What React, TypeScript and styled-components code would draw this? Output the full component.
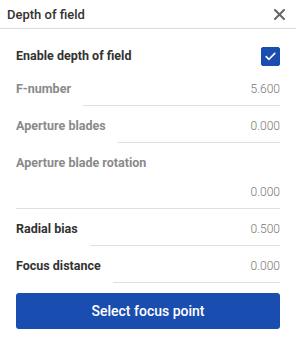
import React, { useState } from 'react';
import styled, { createGlobalStyle } from 'styled-components';

const GlobalStyle = createGlobalStyle`
    html, body {
        margin: 0;
        padding: 0;
        background: #ffffff;
    }
    body {
        font-family: Roboto, "Noto Sans", Arial, sans-serif;
        -webkit-font-smoothing: antialiased;
    }
`;

const Panel = styled.div`
    width: 296px;
    height: 346px;
    background: #fff;
    box-sizing: border-box;
`;

const Header = styled.div`
    height: 28px;
    display: flex;
    align-items: center;
    justify-content: space-between;
    padding: 0 10px 0 7px;
    border-bottom: 1px solid #dcdcdc;
`;

const Title = styled.div`
    font-size: 13px;
    font-weight: 500;
    color: #333;
`;

const CloseButton = styled.button`
    border: none;
    background: none;
    padding: 0;
    width: 14px;
    height: 14px;
    display: flex;
    align-items: center;
    justify-content: center;
    cursor: pointer;
`;

const Body = styled.div`
    display: flex;
    flex-direction: column;
    gap: 10px;
    padding: 14px 16px 0;
`;

const CheckRow = styled.label`
    height: 26px;
    display: flex;
    align-items: center;
    justify-content: space-between;
    cursor: pointer;
`;

const Label = styled.span<{ $disabled?: boolean }>`
    font-size: 12.5px;
    font-weight: 700;
    line-height: 20px;
    white-space: nowrap;
    color: ${(p) => (p.$disabled ? '#8a8a8a' : '#333')};
`;

const CheckBox = styled.span<{ $checked: boolean }>`
    width: 19px;
    height: 19px;
    border-radius: 2px;
    box-sizing: border-box;
    display: flex;
    align-items: center;
    justify-content: center;
    background: ${(p) => (p.$checked ? '#1a4db0' : '#fff')};
    border: 1px solid ${(p) => (p.$checked ? '#1a4db0' : '#999')};
`;

const Field = styled.div`
    display: flex;
    flex-wrap: wrap;
    align-items: flex-start;
    column-gap: 12px;
    row-gap: 9px;
`;

const Value = styled.div`
    flex: 1 1 130px;
    font-size: 12px;
    font-weight: 300;
    line-height: 20px;
    color: #777;
    text-align: right;
    padding-bottom: 6px;
    border-bottom: 1px solid #e0e0e0;
`;

const PrimaryButton = styled.button`
    height: 36px;
    border: none;
    border-radius: 3px;
    background: #1a4db0;
    color: #fff;
    font-family: inherit;
    font-size: 14px;
    font-weight: 500;
    cursor: pointer;
`;

const fields = [
    { label: 'F-number', value: '5.600', disabled: true },
    { label: 'Aperture blades', value: '0.000', disabled: true },
    { label: 'Aperture blade rotation', value: '0.000', disabled: true },
    { label: 'Radial bias', value: '0.500', disabled: false },
    { label: 'Focus distance', value: '0.000', disabled: false },
];

const App = () => {
    const [enabled, setEnabled] = useState(true);

    return (
        <Panel>
            <GlobalStyle />
            <Header>
                <Title>Depth of field</Title>
                <CloseButton aria-label="Close">
                    <svg width="11" height="11" viewBox="0 0 11 11">
                        <path d="M1 1 L10 10 M10 1 L1 10" stroke="#666" strokeWidth="2" strokeLinecap="round" />
                    </svg>
                </CloseButton>
            </Header>
            <Body>
                <CheckRow onClick={() => setEnabled(!enabled)}>
                    <Label>Enable depth of field</Label>
                    <CheckBox $checked={enabled}>
                        {enabled && (
                            <svg width="11" height="9" viewBox="0 0 11 9">
                                <path d="M1.2 4.6 L4 7.3 L9.8 1.4" stroke="#fff" strokeWidth="1.6" fill="none" strokeLinecap="round" strokeLinejoin="round" />
                            </svg>
                        )}
                    </CheckBox>
                </CheckRow>
                {fields.map((f) => (
                    <Field key={f.label}>
                        <Label $disabled={f.disabled}>{f.label}</Label>
                        <Value>{f.value}</Value>
                    </Field>
                ))}
                <PrimaryButton>Select focus point</PrimaryButton>
            </Body>
        </Panel>
    );
};

export default App;
